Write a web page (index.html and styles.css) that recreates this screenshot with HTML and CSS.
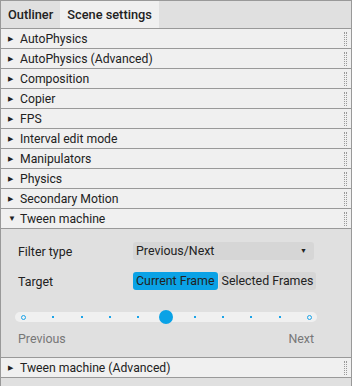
FILE: index.html
```html
<!DOCTYPE html>
<html lang="en">
<head>
    <meta charset="UTF-8">
    <title>Scene settings</title>
    <link rel="stylesheet" href="styles.css">
</head>
<body>
    <div class="panel">
        <div class="tabs">
            <div class="tab">Outliner</div>
            <div class="tab active">Scene settings</div>
        </div>
        <div class="row"><span class="arrow">&#9654;</span>AutoPhysics<span class="grip"></span></div>
        <div class="row"><span class="arrow">&#9654;</span>AutoPhysics (Advanced)<span class="grip"></span></div>
        <div class="row"><span class="arrow">&#9654;</span>Composition<span class="grip"></span></div>
        <div class="row"><span class="arrow">&#9654;</span>Copier<span class="grip"></span></div>
        <div class="row"><span class="arrow">&#9654;</span>FPS<span class="grip"></span></div>
        <div class="row"><span class="arrow">&#9654;</span>Interval edit mode<span class="grip"></span></div>
        <div class="row"><span class="arrow">&#9654;</span>Manipulators<span class="grip"></span></div>
        <div class="row"><span class="arrow">&#9654;</span>Physics<span class="grip"></span></div>
        <div class="row"><span class="arrow">&#9654;</span>Secondary Motion<span class="grip"></span></div>
        <div class="row"><span class="arrow open">&#9660;</span>Tween machine<span class="grip"></span></div>
        <div class="section">
            <div class="field">
                <span class="label">Filter type</span>
                <div class="dropdown">Previous/Next<span class="caret">&#9660;</span></div>
            </div>
            <div class="field">
                <span class="label">Target</span>
                <div class="toggle">
                    <span class="opt on">Current Frame</span>
                    <span class="opt">Selected Frames</span>
                </div>
            </div>
            <div class="slider">
                <span class="tick ring"></span>
                <span class="tick"></span>
                <span class="tick"></span>
                <span class="tick"></span>
                <span class="tick"></span>
                <span class="thumb"></span>
                <span class="tick"></span>
                <span class="tick"></span>
                <span class="tick"></span>
                <span class="tick"></span>
                <span class="tick ring"></span>
            </div>
            <div class="ends">
                <span>Previous</span>
                <span>Next</span>
            </div>
        </div>
        <div class="row"><span class="arrow">&#9654;</span>Tween machine (Advanced)<span class="grip"></span></div>
    </div>
</body>
</html>
```

FILE: styles.css
```css
body {
    margin: 0;
    font-family: Roboto, "Liberation Sans", sans-serif;
    background: #e0e0e0;
    color: #222;
}
.panel {
    width: 350px;
    height: 386px;
    border-left: 1px solid #999;
    border-right: 1px solid #999;
    border-top: 1px solid #999;
    background: #e0e0e0;
}
.tabs {
    display: flex;
    height: 27px;
    border-bottom: 1px solid #999;
    background: #e0e0e0;
}
.tab {
    padding: 0 7px;
    font-size: 12.8px;
    font-weight: 500;
    line-height: 27px;
}
.tab.active {
    background: #f0f0f0;
}
.row {
    display: flex;
    align-items: center;
    height: 19px;
    border-bottom: 1px solid #999;
    background: #f0f0f0;
    font-size: 12.2px;
    position: relative;
}
.arrow {
    width: 12px;
    margin-left: 7px;
    font-size: 7px;
}
.arrow.open {
    font-size: 8px;
}
.grip {
    position: absolute;
    right: 4px;
    top: 3px;
    width: 1px;
    height: 14px;
    border-left: 1px dotted #999;
    border-right: 1px dotted #999;
}
.section {
    height: 129px;
    border-bottom: 1px solid #999;
    padding: 13px 37px 0 17px;
    box-sizing: border-box;
    font-size: 12.4px;
}
.field {
    display: flex;
    align-items: center;
    height: 18px;
    margin-bottom: 12px;
    white-space: nowrap;
}
.label {
    width: 115px;
    flex-shrink: 0;
}
.dropdown {
    flex: 1;
    height: 18px;
    line-height: 18px;
    padding: 0 5px 0 3px;
    background: #d6d6d6;
    border-radius: 3px;
    display: flex;
    justify-content: space-between;
}
.caret {
    font-size: 7px;
    margin-right: 2px;
}
.toggle {
    display: flex;
    gap: 1px;
}
.opt {
    height: 18px;
    line-height: 18px;
    padding: 0 3px;
    background: #d6d6d6;
    border-radius: 3px;
}
.opt.on {
    background: #0aa2e6;
}
.slider {
    margin: 22px -3px 0 -3px;
    height: 10px;
    border-radius: 5px;
    background: #f0f0f0;
    display: flex;
    align-items: center;
    justify-content: space-between;
    padding: 0 5px 0 6px;
}
.tick {
    width: 2px;
    height: 2px;
    background: #1ba3e8;
}
.tick.ring {
    width: 3px;
    height: 3px;
    background: transparent;
    border: 1px solid #1ba3e8;
    border-radius: 50%;
}
.thumb {
    width: 14px;
    height: 14px;
    border-radius: 50%;
    background: #0aa2e6;
    margin: 0 -6px;
}
.ends {
    display: flex;
    justify-content: space-between;
    margin-top: 9px;
    color: #777;
}
```
